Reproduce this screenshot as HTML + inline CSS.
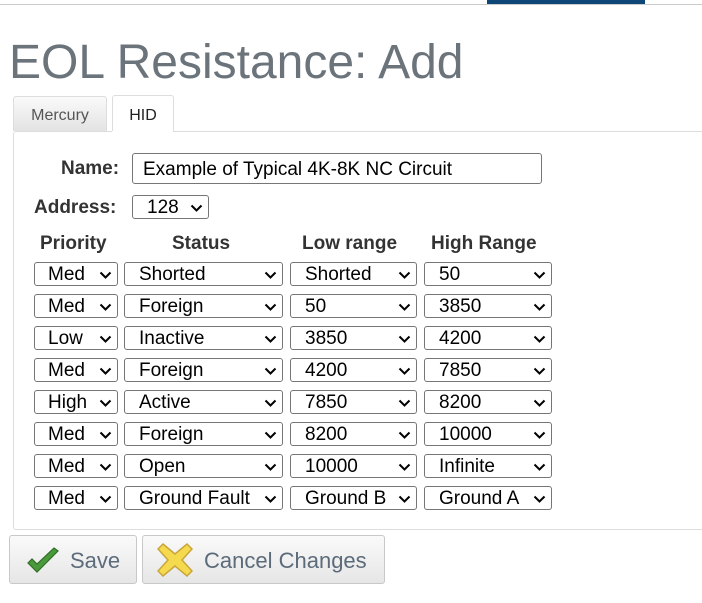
<!DOCTYPE html>
<html><head><style>
body{margin:0;width:702px;height:603px;overflow:hidden;background:#fff;font-family:"Liberation Sans",Arial,sans-serif;position:relative}
.a{position:absolute}
.sel{position:absolute;height:24px;border:1px solid #767676;border-radius:3px;box-sizing:border-box;font-size:19px;line-height:24px;color:#000;padding-left:14px;background:#fff;white-space:nowrap;overflow:hidden}
.sel svg{position:absolute;right:5px;top:8px}
.h{position:absolute;top:233px;font-weight:bold;font-size:19px;color:#333}
.btn{position:absolute;top:535px;height:49px;border:1px solid #c8c8c8;border-radius:3px;box-sizing:border-box;background:linear-gradient(#fafafa,#e6e6e6);font-size:22px;color:#5c6b7a;line-height:49px}
</style></head><body>
<div class="a" style="left:0;top:4px;width:702px;height:1px;background:#ccc"></div>
<div class="a" style="left:487px;top:0;width:158px;height:4px;background:#0e4677"></div>
<div class="a" style="left:9px;top:35px;font-size:48px;color:#6b737b;line-height:56px">EOL Resistance: Add</div>
<div class="a" style="left:13px;top:96px;width:94px;height:35px;border:1px solid #ddd;border-bottom:none;border-radius:3px 3px 0 0;box-sizing:border-box;background:linear-gradient(#fafafa,#e3e3e3);font-size:16px;color:#555;text-align:center;line-height:37px">Mercury</div>
<div class="a" style="left:112px;top:95px;width:62px;height:37px;border:1px solid #ddd;border-bottom:none;border-radius:3px 3px 0 0;box-sizing:border-box;background:#fff;font-size:16px;color:#222;text-align:center;line-height:39px">HID</div>
<div class="a" style="left:13px;top:131px;width:720px;height:399px;border:1px solid #ddd;border-radius:3px;box-sizing:border-box;background:transparent"></div>
<div class="a" style="left:112px;top:131px;width:61px;height:1px;background:#fff"></div>
<div class="a" style="left:61px;top:158px;font-weight:bold;font-size:19px;color:#333">Name:</div>
<div class="a" style="left:132px;top:153px;width:410px;height:31px;border:1px solid #767676;border-radius:3px;box-sizing:border-box;font-size:19px;line-height:31px;padding-left:10px">Example of Typical 4K-8K NC Circuit</div>
<div class="a" style="left:34px;top:197px;font-weight:bold;font-size:19px;color:#333">Address:</div>
<div class="sel" style="left:132px;top:195px;width:77px;padding-left:14px">128<svg width="13" height="8" viewBox="0 0 13 8"><path d="M1.5 1.5l5 5 5-5" stroke="#000" stroke-width="2" fill="none"/></svg></div>
<div class="h" style="left:40px">Priority</div>
<div class="h" style="left:172px">Status</div>
<div class="h" style="left:302px">Low range</div>
<div class="h" style="left:431px">High Range</div>
<div id="rows"></div>
<script>
var d=[["Med","Shorted","Shorted","50"],["Med","Foreign","50","3850"],["Low","Inactive","3850","4200"],["Med","Foreign","4200","7850"],["High","Active","7850","8200"],["Med","Foreign","8200","10000"],["Med","Open","10000","Infinite"],["Med","Ground Fault","Ground B","Ground A"]];
var cols=[[34,84],[124,159],[290,127],[424,128]];
var ar='<svg width="13" height="8" viewBox="0 0 13 8"><path d="M1.5 1.5l5 5 5-5" stroke="#000" stroke-width="2" fill="none"/></svg>';
var h='';
d.forEach(function(r,i){r.forEach(function(t,j){var c=cols[j];h+='<div class="sel" style="left:'+c[0]+'px;top:'+(262+i*32)+'px;width:'+c[1]+'px;padding-left:'+(j==0?13:14)+'px">'+t+ar+'</div>';});});
document.getElementById('rows').innerHTML=h;
</script>
<div class="btn" style="left:9px;width:128px"><svg class="a" style="left:15px;top:10px" width="36" height="30" viewBox="0 0 36 30"><path d="M3 17l9 9L33 5l-4-3L12 18l-5-5z" fill="#4a9a3c" stroke="#2e6e25" stroke-width="1.2"/></svg><span class="a" style="left:60px">Save</span></div>
<div class="btn" style="left:142px;width:243px"><svg class="a" style="left:14px;top:6px" width="36" height="36" viewBox="0 0 36 36"><path d="M6 2l12 10L30 2l5 5-10 11 10 11-5 5-12-10L6 34l-5-5 10-11L1 7z" fill="#f5d94e" stroke="#c9a63a" stroke-width="1.5"/></svg><span class="a" style="left:61px">Cancel Changes</span></div>
</body></html>
